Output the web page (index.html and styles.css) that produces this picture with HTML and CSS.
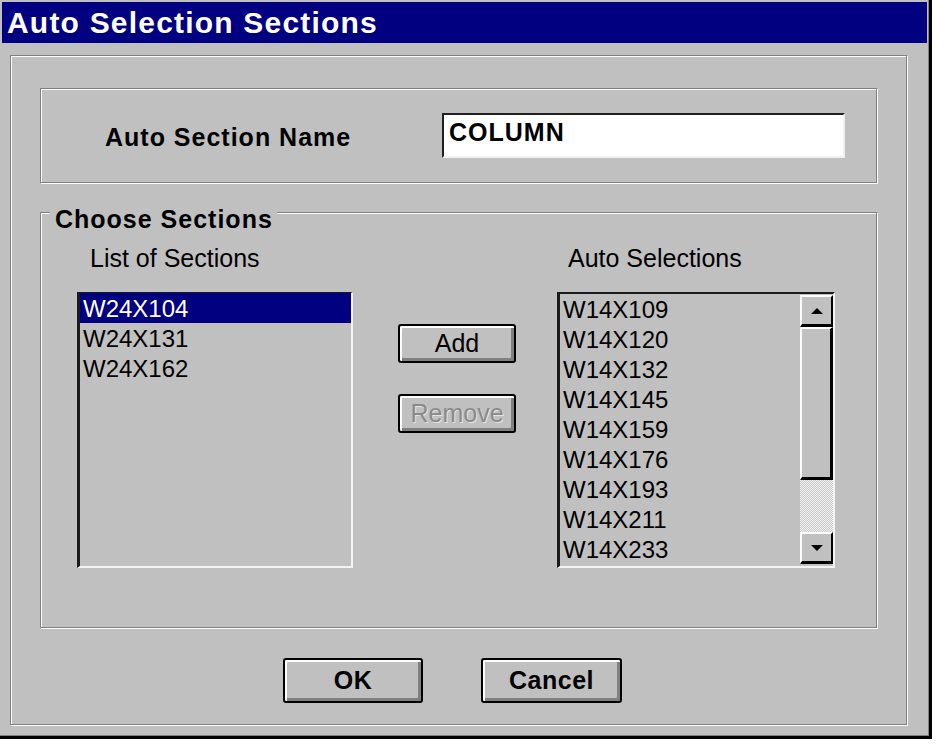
FILE: index.html
```html
<!DOCTYPE html>
<html>
<head>
<meta charset="utf-8">
<title>Auto Selection Sections</title>
<link rel="stylesheet" href="styles.css">
</head>
<body>
<div class="window">
  <div class="titlebar">Auto Selection Sections</div>
  <div class="frame">
    <div class="group group-name">
      <span class="name-label">Auto Section Name</span>
      <div class="textfield">COLUMN</div>
    </div>
    <div class="group group-sections">
      <span class="legend">Choose Sections</span>
      <div class="col col-left">
        <div class="col-label">List of Sections</div>
        <div class="listbox">
          <div class="items">
            <div class="item selected">W24X104</div>
            <div class="item">W24X131</div>
            <div class="item">W24X162</div>
          </div>
        </div>
      </div>
      <div class="col col-mid">
        <button class="btn btn-add">Add</button>
        <button class="btn btn-remove" disabled>Remove</button>
      </div>
      <div class="col col-right">
        <div class="col-label col-label-right">Auto Selections</div>
        <div class="listbox">
          <div class="items">
            <div class="item">W14X109</div>
            <div class="item">W14X120</div>
            <div class="item">W14X132</div>
            <div class="item">W14X145</div>
            <div class="item">W14X159</div>
            <div class="item">W14X176</div>
            <div class="item">W14X193</div>
            <div class="item">W14X211</div>
            <div class="item">W14X233</div>
          </div>
          <div class="scrollbar">
            <div class="sb-btn"><span class="arrow-up"></span></div>
            <div class="sb-thumb"></div>
            <div class="sb-track"></div>
            <div class="sb-btn sb-btn-down"><span class="arrow-down"></span></div>
          </div>
        </div>
      </div>
    </div>
    <div class="actions">
      <button class="btn btn-bold btn-ok">OK</button>
      <button class="btn btn-bold btn-cancel">Cancel</button>
    </div>
  </div>
</div>
</body>
</html>
```

FILE: styles.css
```css
html, body {
  margin: 0;
  padding: 0;
  background: #ffffff;
}

body {
  font-family: "Liberation Sans", Arial, sans-serif;
  color: #000;
}

.window {
  width: 932px;
  height: 739px;
  box-sizing: border-box;
  background: #c0c0c0;
  padding: 2px 0 0 2px;
  border-right: 3px solid #000;
  border-bottom: 3px solid #000;
  box-shadow: inset -1px -1px 0 #808080;
  display: flex;
  flex-direction: column;
}

.titlebar {
  height: 41px;
  margin-right: 2px;
  background: #000080;
  color: #fff;
  font-weight: bold;
  font-size: 30px;
  line-height: 41px;
  letter-spacing: 1.2px;
  padding-left: 5px;
  white-space: nowrap;
}

.frame {
  margin: 12px 0 0 8px;
  width: 897px;
  height: 670px;
  box-sizing: border-box;
  border: 1px solid #808080;
  box-shadow: inset 1px 1px 0 #fff, 1px 1px 0 #fff;
  padding: 32px 29px 0 29px;
  display: flex;
  flex-direction: column;
}

.group {
  width: 837px;
  box-sizing: border-box;
  border: 1px solid #808080;
  box-shadow: inset 1px 1px 0 #fff, 1px 1px 0 #fff;
}

.group-name {
  height: 95px;
  display: flex;
  align-items: center;
  padding-left: 64px;
}

.name-label {
  font-weight: bold;
  font-size: 25px;
  line-height: 28px;
  letter-spacing: 1px;
  padding-top: 3px;
}

.textfield {
  margin-left: auto;
  margin-right: 31px;
  width: 403px;
  height: 45px;
  box-sizing: border-box;
  background: #fff;
  border-style: solid;
  border-width: 2px;
  border-color: #202020 #f0f0f0 #f0f0f0 #202020;
  padding: 3px 0 0 5px;
  font-weight: bold;
  font-size: 25px;
  line-height: 28px;
  letter-spacing: 1px;
}

.group-sections {
  position: relative;
  margin-top: 29px;
  height: 416px;
  padding: 31px 0 0 36px;
  display: flex;
  align-items: flex-start;
}

.legend {
  position: absolute;
  top: -8px;
  left: 9px;
  padding: 0 4px 0 5px;
  background: #c0c0c0;
  font-weight: bold;
  font-size: 25px;
  line-height: 28px;
  letter-spacing: 1px;
  white-space: nowrap;
}

.col {
  display: flex;
  flex-direction: column;
}

.col-left {
  width: 276px;
}

.col-mid {
  width: 118px;
  margin-left: 45px;
  padding-top: 80px;
}

.col-right {
  width: 278px;
  margin-left: 41px;
}

.col-label {
  font-size: 25px;
  line-height: 28px;
  margin-left: 13px;
  white-space: nowrap;
}

.col-label-right {
  margin-left: 11px;
}

.listbox {
  margin-top: 20px;
  height: 276px;
  box-sizing: border-box;
  border-style: solid;
  border-width: 2px 2px 2px 3px;
  border-color: #1a1a1a #f4f4f4 #f4f4f4 #1a1a1a;
  display: flex;
  overflow: hidden;
}

.col-left .listbox {
  border-top-width: 1px;
}

.items {
  flex: 1;
  display: flex;
  flex-direction: column;
}

.item {
  height: 30px;
  line-height: 31px;
  font-size: 24px;
  padding-left: 3px;
  white-space: nowrap;
}

.item.selected {
  background: #000080;
  color: #fff;
}

.scrollbar {
  width: 33px;
  margin: 1px 0 2px 0;
  display: flex;
  flex-direction: column;
}

.sb-btn {
  height: 32px;
  box-sizing: border-box;
  background: #c0c0c0;
  border-style: solid;
  border-width: 2px 2px 3px 2px;
  border-color: #fff #000 #000 #fff;
  display: flex;
  align-items: center;
  justify-content: center;
}

.arrow-up {
  width: 0;
  height: 0;
  border-left: 6px solid transparent;
  border-right: 6px solid transparent;
  border-bottom: 6px solid #000;
}

.arrow-down {
  width: 0;
  height: 0;
  border-left: 6px solid transparent;
  border-right: 6px solid transparent;
  border-top: 6px solid #000;
}

.sb-thumb {
  height: 153px;
  box-sizing: border-box;
  background: #c0c0c0;
  border-style: solid;
  border-width: 2px 3px 3px 2px;
  border-color: #fff #000 #000 #fff;
}

.sb-track {
  flex: 1;
  background: repeating-conic-gradient(#c8c8c8 0 25%, #f2f2f2 0 50%) 0 0 / 2px 2px;
}

.btn {
  box-sizing: border-box;
  background: #c0c0c0;
  border: 2px solid #000;
  border-radius: 3px;
  box-shadow: inset 2px 2px 0 #fff, inset -3px -3px 0 #808080;
  font-family: "Liberation Sans", Arial, sans-serif;
  font-size: 25px;
  color: #000;
  padding: 0;
  margin: 0;
}

.btn-add {
  height: 39px;
  width: 118px;
  line-height: 33px;
}

.btn-remove {
  height: 39px;
  width: 118px;
  margin-top: 31px;
  color: #8a8a8a;
  text-shadow: 1px 1px 0 #e4e4e4;
}

.actions {
  display: flex;
  margin-top: 30px;
  padding-left: 243px;
}

.btn-bold {
  height: 45px;
  font-weight: bold;
  letter-spacing: 0.5px;
}

.btn-ok {
  width: 140px;
}

.btn-cancel {
  width: 141px;
  margin-left: 58px;
}
```
